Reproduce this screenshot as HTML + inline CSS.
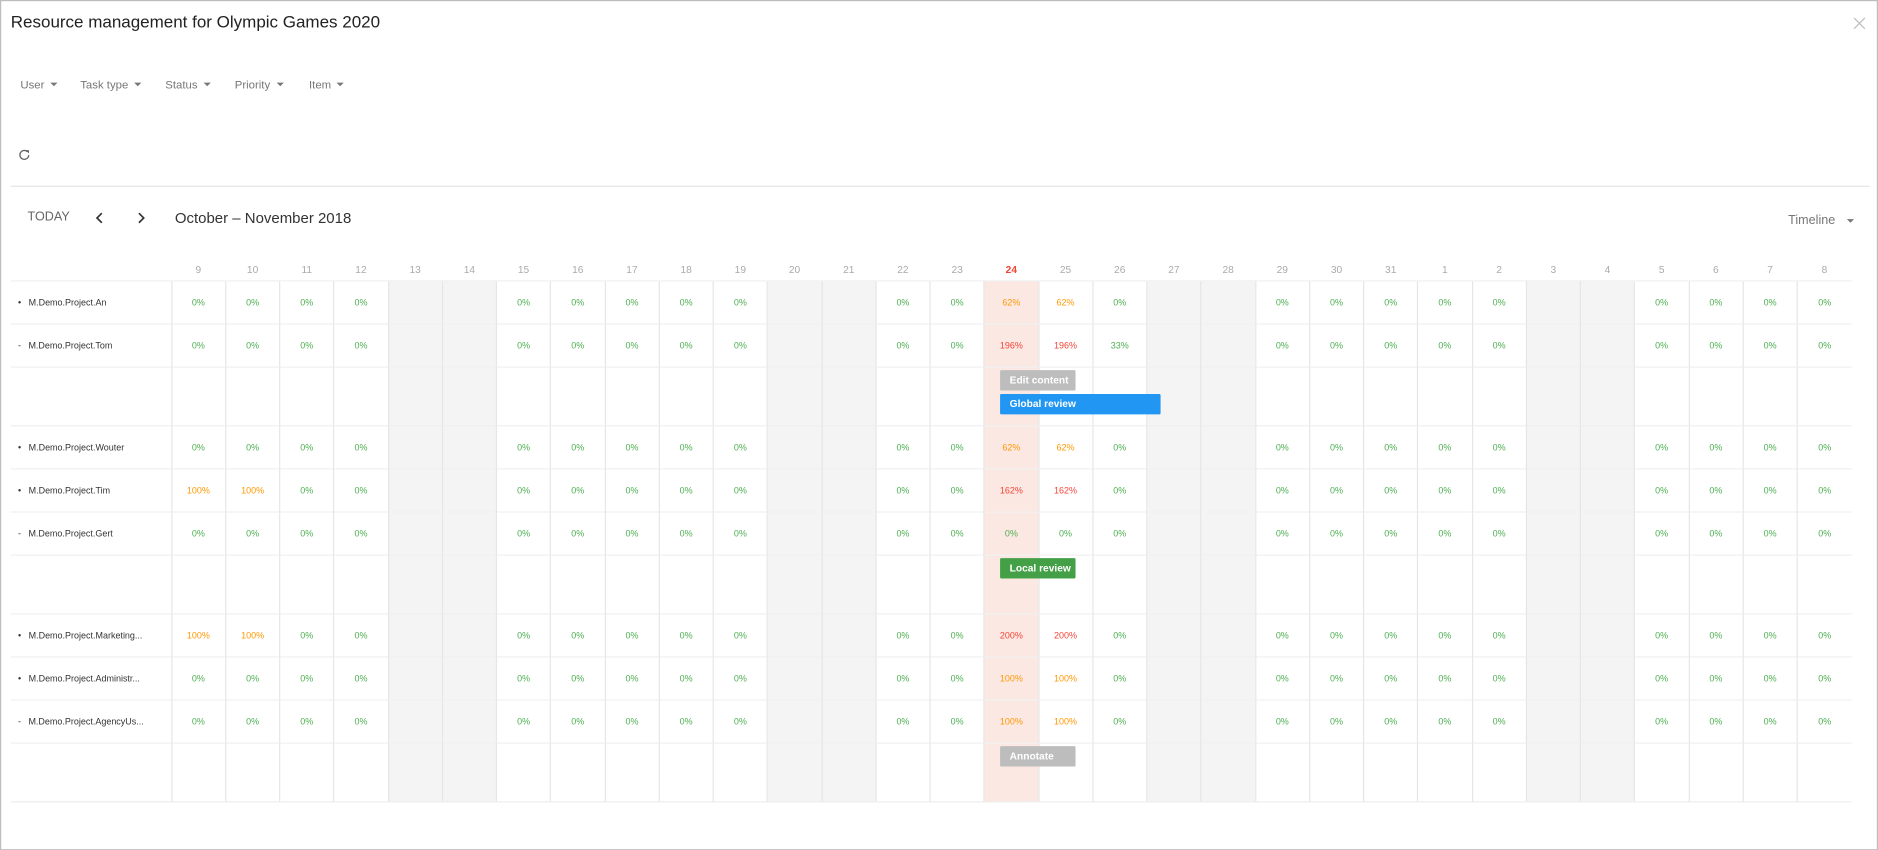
<!DOCTYPE html>
<html><head><meta charset="utf-8"><style>
html,body{margin:0;padding:0;width:1878px;height:850px;overflow:hidden;background:#fff;font-family:"Liberation Sans",sans-serif}
#w{position:absolute;left:0;top:0;width:1568px;height:710px;transform:scale(1.19770);transform-origin:0 0;box-sizing:border-box;border:1px solid #bdbdbd;color:#333}
.a{position:absolute;white-space:nowrap}
.f{font-size:9.5px;color:#777;top:65px}
.f:after{content:"";display:inline-block;margin-left:5px;vertical-align:2px;border-left:3px solid transparent;border-right:3px solid transparent;border-top:3px solid #777}
table{position:absolute;left:8px;top:214px;border-collapse:collapse;table-layout:fixed;width:1537px}
td{padding:0;text-align:center;font-size:7.5px;border-left:1px solid #e6e6e6;border-top:1px solid #f0f0f0;height:35px}
td:first-child{text-align:left;border-left:none;font-size:7.5px;color:#333;padding-left:6px;white-space:nowrap;overflow:hidden}
tr.h td{border:none;height:19px;color:#aaa;font-size:8.5px}
tr.k td{height:48px}
.g{color:#4caf50}.o{color:#ff9800}.r{color:#f44336}
.w{background:#f4f4f4}.t{background:#fce8e3}
tr.h td.t{background:none;color:#f44336;font-weight:bold}
.bar{position:absolute;height:17px;color:#fff;font-size:8.5px;font-weight:bold;line-height:17px;padding-left:8px;box-sizing:border-box;border-radius:1px}
</style></head><body><div id="w">
<div class="a" style="left:8px;top:10px;font-size:14.2px;color:#222">Resource management for Olympic Games 2020</div>
<svg class="a" style="left:1546px;top:13px" width="11" height="11"><path d="M1 1L10 10M10 1L1 10" stroke="#bbb" stroke-width="1"/></svg>
<div class="a f" style="left:16px">User</div>
<div class="a f" style="left:66px">Task type</div>
<div class="a f" style="left:137px">Status</div>
<div class="a f" style="left:195px">Priority</div>
<div class="a f" style="left:257px">Item</div>
<svg class="a" style="left:14px;top:123px" width="11" height="11" viewBox="0 0 11 11"><path d="M9 5.5A3.7 3.7 0 1 1 7.8 2.6" fill="none" stroke="#666" stroke-width="1.1"/><path d="M6.5 1.2L9.3 1.5L9 4.3Z" fill="#666"/></svg>
<div class="a" style="left:8px;top:154px;width:1552px;height:1px;background:#e4e4e4"></div>
<div class="a" style="left:22px;top:174px;font-size:10.5px;color:#666">TODAY</div>
<svg class="a" style="left:78px;top:176px" width="8" height="10"><path d="M6 1L2 5L6 9" fill="none" stroke="#333" stroke-width="1.4"/></svg>
<svg class="a" style="left:113px;top:176px" width="8" height="10"><path d="M2 1L6 5L2 9" fill="none" stroke="#333" stroke-width="1.4"/></svg>
<div class="a" style="left:145px;top:174px;font-size:12.5px;color:#333">October – November 2018</div>
<div class="a" style="left:1492px;top:177px;font-size:10.5px;color:#777">Timeline</div>
<div class="a" style="left:1541px;top:182px;border-left:3px solid transparent;border-right:3px solid transparent;border-top:3px solid #777"></div>
<table>
<colgroup><col style="width:134px"><col span="31" style="width:45.26px"></colgroup>
<tr class="h"><td></td><td>9</td><td>10</td><td>11</td><td>12</td><td>13</td><td>14</td><td>15</td><td>16</td><td>17</td><td>18</td><td>19</td><td>20</td><td>21</td><td>22</td><td>23</td><td class="t">24</td><td>25</td><td>26</td><td>27</td><td>28</td><td>29</td><td>30</td><td>31</td><td>1</td><td>2</td><td>3</td><td>4</td><td>5</td><td>6</td><td>7</td><td>8</td></tr>
<tr><td>•&nbsp;&nbsp; M.Demo.Project.An</td><td class="g">0%</td><td class="g">0%</td><td class="g">0%</td><td class="g">0%</td><td class="w"></td><td class="w"></td><td class="g">0%</td><td class="g">0%</td><td class="g">0%</td><td class="g">0%</td><td class="g">0%</td><td class="w"></td><td class="w"></td><td class="g">0%</td><td class="g">0%</td><td class="t o">62%</td><td class="o">62%</td><td class="g">0%</td><td class="w"></td><td class="w"></td><td class="g">0%</td><td class="g">0%</td><td class="g">0%</td><td class="g">0%</td><td class="g">0%</td><td class="w"></td><td class="w"></td><td class="g">0%</td><td class="g">0%</td><td class="g">0%</td><td class="g">0%</td></tr>
<tr><td>-&nbsp;&nbsp; M.Demo.Project.Tom</td><td class="g">0%</td><td class="g">0%</td><td class="g">0%</td><td class="g">0%</td><td class="w"></td><td class="w"></td><td class="g">0%</td><td class="g">0%</td><td class="g">0%</td><td class="g">0%</td><td class="g">0%</td><td class="w"></td><td class="w"></td><td class="g">0%</td><td class="g">0%</td><td class="t r">196%</td><td class="r">196%</td><td class="g">33%</td><td class="w"></td><td class="w"></td><td class="g">0%</td><td class="g">0%</td><td class="g">0%</td><td class="g">0%</td><td class="g">0%</td><td class="w"></td><td class="w"></td><td class="g">0%</td><td class="g">0%</td><td class="g">0%</td><td class="g">0%</td></tr>
<tr class="k"><td></td><td></td><td></td><td></td><td></td><td class="w"></td><td class="w"></td><td></td><td></td><td></td><td></td><td></td><td class="w"></td><td class="w"></td><td></td><td></td><td class="t"></td><td></td><td></td><td class="w"></td><td class="w"></td><td></td><td></td><td></td><td></td><td></td><td class="w"></td><td class="w"></td><td></td><td></td><td></td><td></td></tr>
<tr><td>•&nbsp;&nbsp; M.Demo.Project.Wouter</td><td class="g">0%</td><td class="g">0%</td><td class="g">0%</td><td class="g">0%</td><td class="w"></td><td class="w"></td><td class="g">0%</td><td class="g">0%</td><td class="g">0%</td><td class="g">0%</td><td class="g">0%</td><td class="w"></td><td class="w"></td><td class="g">0%</td><td class="g">0%</td><td class="t o">62%</td><td class="o">62%</td><td class="g">0%</td><td class="w"></td><td class="w"></td><td class="g">0%</td><td class="g">0%</td><td class="g">0%</td><td class="g">0%</td><td class="g">0%</td><td class="w"></td><td class="w"></td><td class="g">0%</td><td class="g">0%</td><td class="g">0%</td><td class="g">0%</td></tr>
<tr><td>•&nbsp;&nbsp; M.Demo.Project.Tim</td><td class="o">100%</td><td class="o">100%</td><td class="g">0%</td><td class="g">0%</td><td class="w"></td><td class="w"></td><td class="g">0%</td><td class="g">0%</td><td class="g">0%</td><td class="g">0%</td><td class="g">0%</td><td class="w"></td><td class="w"></td><td class="g">0%</td><td class="g">0%</td><td class="t r">162%</td><td class="r">162%</td><td class="g">0%</td><td class="w"></td><td class="w"></td><td class="g">0%</td><td class="g">0%</td><td class="g">0%</td><td class="g">0%</td><td class="g">0%</td><td class="w"></td><td class="w"></td><td class="g">0%</td><td class="g">0%</td><td class="g">0%</td><td class="g">0%</td></tr>
<tr><td>-&nbsp;&nbsp; M.Demo.Project.Gert</td><td class="g">0%</td><td class="g">0%</td><td class="g">0%</td><td class="g">0%</td><td class="w"></td><td class="w"></td><td class="g">0%</td><td class="g">0%</td><td class="g">0%</td><td class="g">0%</td><td class="g">0%</td><td class="w"></td><td class="w"></td><td class="g">0%</td><td class="g">0%</td><td class="t g">0%</td><td class="g">0%</td><td class="g">0%</td><td class="w"></td><td class="w"></td><td class="g">0%</td><td class="g">0%</td><td class="g">0%</td><td class="g">0%</td><td class="g">0%</td><td class="w"></td><td class="w"></td><td class="g">0%</td><td class="g">0%</td><td class="g">0%</td><td class="g">0%</td></tr>
<tr class="k"><td></td><td></td><td></td><td></td><td></td><td class="w"></td><td class="w"></td><td></td><td></td><td></td><td></td><td></td><td class="w"></td><td class="w"></td><td></td><td></td><td class="t"></td><td></td><td></td><td class="w"></td><td class="w"></td><td></td><td></td><td></td><td></td><td></td><td class="w"></td><td class="w"></td><td></td><td></td><td></td><td></td></tr>
<tr><td>•&nbsp;&nbsp; M.Demo.Project.Marketing...</td><td class="o">100%</td><td class="o">100%</td><td class="g">0%</td><td class="g">0%</td><td class="w"></td><td class="w"></td><td class="g">0%</td><td class="g">0%</td><td class="g">0%</td><td class="g">0%</td><td class="g">0%</td><td class="w"></td><td class="w"></td><td class="g">0%</td><td class="g">0%</td><td class="t r">200%</td><td class="r">200%</td><td class="g">0%</td><td class="w"></td><td class="w"></td><td class="g">0%</td><td class="g">0%</td><td class="g">0%</td><td class="g">0%</td><td class="g">0%</td><td class="w"></td><td class="w"></td><td class="g">0%</td><td class="g">0%</td><td class="g">0%</td><td class="g">0%</td></tr>
<tr><td>•&nbsp;&nbsp; M.Demo.Project.Administr...</td><td class="g">0%</td><td class="g">0%</td><td class="g">0%</td><td class="g">0%</td><td class="w"></td><td class="w"></td><td class="g">0%</td><td class="g">0%</td><td class="g">0%</td><td class="g">0%</td><td class="g">0%</td><td class="w"></td><td class="w"></td><td class="g">0%</td><td class="g">0%</td><td class="t o">100%</td><td class="o">100%</td><td class="g">0%</td><td class="w"></td><td class="w"></td><td class="g">0%</td><td class="g">0%</td><td class="g">0%</td><td class="g">0%</td><td class="g">0%</td><td class="w"></td><td class="w"></td><td class="g">0%</td><td class="g">0%</td><td class="g">0%</td><td class="g">0%</td></tr>
<tr><td>-&nbsp;&nbsp; M.Demo.Project.AgencyUs...</td><td class="g">0%</td><td class="g">0%</td><td class="g">0%</td><td class="g">0%</td><td class="w"></td><td class="w"></td><td class="g">0%</td><td class="g">0%</td><td class="g">0%</td><td class="g">0%</td><td class="g">0%</td><td class="w"></td><td class="w"></td><td class="g">0%</td><td class="g">0%</td><td class="t o">100%</td><td class="o">100%</td><td class="g">0%</td><td class="w"></td><td class="w"></td><td class="g">0%</td><td class="g">0%</td><td class="g">0%</td><td class="g">0%</td><td class="g">0%</td><td class="w"></td><td class="w"></td><td class="g">0%</td><td class="g">0%</td><td class="g">0%</td><td class="g">0%</td></tr>
<tr class="k"><td style="border-bottom:1px solid #eee"></td><td></td><td></td><td></td><td></td><td class="w"></td><td class="w"></td><td></td><td></td><td></td><td></td><td></td><td class="w"></td><td class="w"></td><td></td><td></td><td class="t"></td><td></td><td></td><td class="w"></td><td class="w"></td><td></td><td></td><td></td><td></td><td></td><td class="w"></td><td class="w"></td><td></td><td></td><td></td><td></td></tr>
</table>
<div class="a" style="left:8px;top:668px;width:1537px;height:1px;background:#eee"></div>
<div class="bar" style="left:834px;top:308px;width:63px;background:#bdbdbd">Edit content</div>
<div class="bar" style="left:834px;top:328px;width:134px;background:#2196f3">Global review</div>
<div class="bar" style="left:834px;top:465px;width:63px;background:#43a047">Local review</div>
<div class="bar" style="left:834px;top:622px;width:63px;background:#bdbdbd">Annotate</div>
</div></body></html>
